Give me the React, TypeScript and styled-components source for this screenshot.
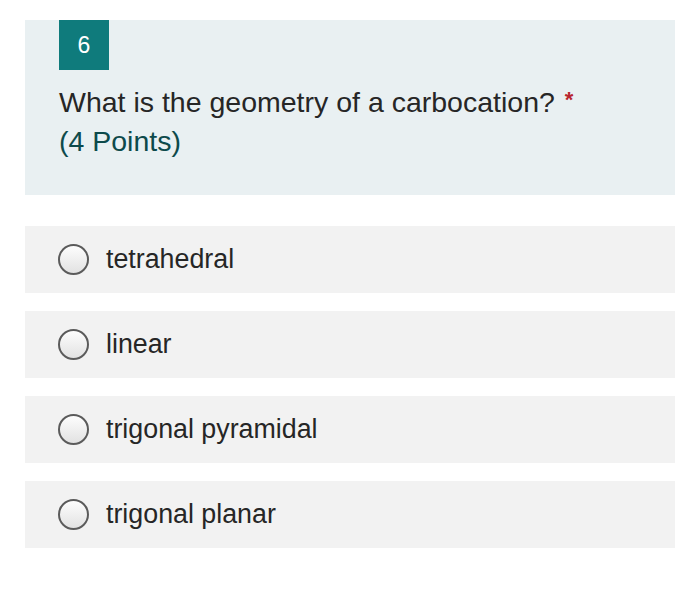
import React from "react";
import styled, { createGlobalStyle } from "styled-components";

const Global = createGlobalStyle`
  html, body { margin: 0; padding: 0; background: #ffffff; }
  body { font-family: "Liberation Sans", Arial, sans-serif; }
`;

const Page = styled.div`
  width: 700px;
  height: 608px;
  padding: 20px 25px 0 25px;
  box-sizing: border-box;
  display: flex;
  flex-direction: column;
`;

const Header = styled.div`
  background: #e9f0f2;
  height: 175px;
  padding: 0 34px;
  box-sizing: border-box;
  display: flex;
  flex-direction: column;
`;

const Badge = styled.div`
  width: 50px;
  height: 50px;
  background: #0f7b7c;
  color: #ffffff;
  font-size: 23px;
  display: flex;
  align-items: center;
  justify-content: center;
`;

const Question = styled.div`
  margin-top: 10px;
  font-size: 28.5px;
  line-height: 39px;
  color: #262626;
`;

const Star = styled.span`
  color: #b8262f;
  font-size: 22px;
  font-weight: bold;
  margin-left: 10px;
  vertical-align: 5px;
`;

const Points = styled.div`
  font-size: 28.5px;
  line-height: 39px;
  color: #0d4a4b;
`;

const Options = styled.div`
  margin-top: 31px;
  display: flex;
  flex-direction: column;
  gap: 18px;
`;

const Option = styled.div`
  height: 67px;
  background: #f2f2f2;
  display: flex;
  align-items: center;
  padding-left: 33px;
  box-sizing: border-box;
`;

const Radio = styled.span`
  width: 31px;
  height: 31px;
  border-radius: 50%;
  border: 2px solid #5b5b5b;
  box-sizing: border-box;
  background: linear-gradient(180deg, #fdfdfd 0%, #e2e2e2 100%);
  flex-shrink: 0;
`;

const Label = styled.span`
  margin-left: 17px;
  font-size: 26.8px;
  color: #262626;
`;

const choices = ["tetrahedral", "linear", "trigonal pyramidal", "trigonal planar"];

export default function App() {
  return (
    <>
      <Global />
      <Page>
        <Header>
          <Badge>6</Badge>
          <Question>
            What is the geometry of a carbocation?<Star>*</Star>
          </Question>
          <Points>(4 Points)</Points>
        </Header>
        <Options>
          {choices.map((c) => (
            <Option key={c}>
              <Radio />
              <Label>{c}</Label>
            </Option>
          ))}
        </Options>
      </Page>
    </>
  );
}
